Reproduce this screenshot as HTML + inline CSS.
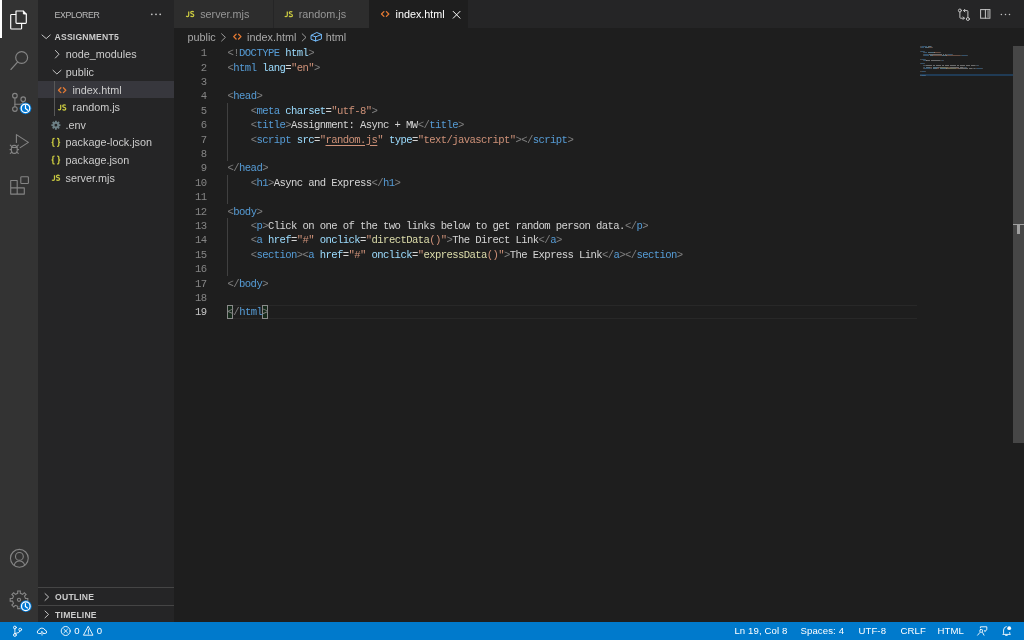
<!DOCTYPE html>
<html><head><meta charset="utf-8">
<style>
*{margin:0;padding:0;box-sizing:border-box}
html,body{width:1024px;height:640px;overflow:hidden;background:#1e1e1e;font-family:"Liberation Sans",sans-serif;color:#ccc;position:relative}
#ov{position:absolute;left:0;top:0;width:1024px;height:640px;overflow:visible}
.bx{position:absolute}
.t{position:absolute;white-space:pre;line-height:1}
#wrap{position:absolute;left:0;top:0;width:1024px;height:640px;will-change:transform}
.ln{position:absolute;left:174px;width:32.4px;height:14.4px;line-height:14.4px;text-align:right;color:#858585;font-family:"Liberation Mono",monospace;font-size:10.6px;letter-spacing:-0.6px;white-space:pre}
.ln.cur{color:#c6c6c6}
.cl{position:absolute;left:227.6px;height:14.4px;line-height:14.4px;color:#d4d4d4;font-family:"Liberation Mono",monospace;font-size:10.6px;letter-spacing:-0.6px;white-space:pre}
.g{color:#808080}.b{color:#569cd6}.a{color:#9cdcfe}.s{color:#ce9178}.y{color:#dcdcaa}.w{color:#d4d4d4}.p{color:#ce9178}
.bm{color:#808080}
u{text-decoration:underline;text-underline-offset:2px;text-decoration-thickness:1px}
.si{position:absolute;font-size:10.8px;color:#cccccc;white-space:pre;line-height:1}
.hd{position:absolute;font-size:8.6px;font-weight:bold;color:#cccccc;white-space:pre;line-height:1;letter-spacing:0.2px}
.st{position:absolute;font-size:9.6px;color:#fff;white-space:pre;line-height:1;letter-spacing:0.1px}
.js{position:absolute;font-size:8.6px;font-weight:bold;color:#cbcb41;white-space:pre;line-height:1;transform-origin:0 0;transform:scaleX(0.78);letter-spacing:-0.1px}
</style></head><body>
<!-- backgrounds -->
<div class="bx" style="left:0;top:0;width:38.4px;height:622.4px;background:#333333"></div>
<div class="bx" style="left:0;top:0;width:2px;height:38.4px;background:#ffffff"></div>
<div class="bx" style="left:38.4px;top:0;width:135.6px;height:622.4px;background:#252526"></div>
<div class="bx" style="left:38.4px;top:80.8px;width:135.6px;height:17.6px;background:#37373d"></div>
<div class="bx" style="left:54.2px;top:80.8px;width:0.8px;height:35.2px;background:#585858"></div>
<div class="bx" style="left:38.4px;top:587px;width:135.6px;height:0.8px;background:#454545"></div>
<div class="bx" style="left:38.4px;top:604.8px;width:135.6px;height:0.8px;background:#454545"></div>
<div class="bx" style="left:174px;top:0;width:850px;height:28px;background:#252526"></div>
<div class="bx" style="left:174px;top:0;width:98.5px;height:28px;background:#2d2d2d"></div>
<div class="bx" style="left:273.5px;top:0;width:95.3px;height:28px;background:#2d2d2d"></div>
<div class="bx" style="left:369.4px;top:0;width:98.4px;height:28px;background:#1e1e1e"></div>
<div class="bx" style="left:1013px;top:45.6px;width:11px;height:397.2px;background:#464646"></div>
<div class="bx" style="left:1013px;top:224px;width:11px;height:1px;background:#a0a0a0"></div>
<div class="bx" style="left:1016.8px;top:224.5px;width:3.2px;height:9.5px;background:#a0a0a0"></div>
<div class="bx" style="left:227.6px;top:304.8px;width:689px;height:14.4px;border-top:1px solid #282828;border-bottom:1px solid #282828"></div>
<div class="bx" style="left:920px;top:74.4px;width:93px;height:1.6px;background:#203b55"></div>
<div class="bx" style="left:227px;top:103.2px;width:1px;height:57.6px;background:#404040"></div>
<div class="bx" style="left:227px;top:175.2px;width:1px;height:28.8px;background:#404040"></div>
<div class="bx" style="left:227px;top:218.4px;width:1px;height:57.6px;background:#404040"></div>
<div class="bx" style="left:227.2px;top:304.8px;width:6.2px;height:14.4px;border:1px solid #8a8a8a;background:#15291a"></div>
<div class="bx" style="left:262px;top:304.8px;width:6.2px;height:14.4px;border:1px solid #8a8a8a;background:#15291a"></div>
<div class="bx" style="left:0;top:622.4px;width:1024px;height:17.6px;background:#007acc"></div>

<div id="wrap">
<!-- sidebar text -->
<div class="t" style="left:54.6px;top:10.6px;font-size:8.8px;color:#bbbbbb;letter-spacing:-0.38px">EXPLORER</div>
<div class="hd" style="left:54.6px;top:33.4px">ASSIGNMENT5</div>
<div class="si" style="left:65.8px;top:49.4px">node_modules</div>
<div class="si" style="left:65.8px;top:67px">public</div>
<div class="si" style="left:72.4px;top:84.6px">index.html</div>
<div class="si" style="left:72.6px;top:102.2px">random.js</div>
<div class="si" style="left:65.6px;top:119.8px">.env</div>
<div class="si" style="left:65.6px;top:137.4px">package-lock.json</div>
<div class="si" style="left:65.6px;top:155px">package.json</div>
<div class="si" style="left:65.6px;top:172.6px">server.mjs</div>
<div class="hd" style="left:55.1px;top:593.2px">OUTLINE</div>
<div class="hd" style="left:55.1px;top:610.6px">TIMELINE</div>

<!-- tabs text -->
<div class="si" style="left:200.2px;top:9.4px;color:#969696">server.mjs</div>
<div class="si" style="left:298.7px;top:9.4px;color:#969696">random.js</div>
<div class="si" style="left:395.5px;top:9.4px;color:#ffffff">index.html</div>

<!-- breadcrumbs -->
<div class="si" style="left:187.5px;top:31.8px;color:#a9a9a9">public</div>
<div class="si" style="left:247.1px;top:31.8px;color:#a9a9a9">index.html</div>
<div class="si" style="left:325.7px;top:31.8px;color:#a9a9a9">html</div>

<div class="ln" style="top:46.10px">1</div>
<div class="cl" style="top:46.10px"><span class="g">&lt;!</span><span class="b">DOCTYPE</span><span class="w"> </span><span class="a">html</span><span class="g">&gt;</span></div>
<div class="ln" style="top:60.50px">2</div>
<div class="cl" style="top:60.50px"><span class="g">&lt;</span><span class="b">html</span><span class="w"> </span><span class="a">lang</span><span class="w">=</span><span class="s">"en"</span><span class="g">&gt;</span></div>
<div class="ln" style="top:74.90px">3</div>
<div class="cl" style="top:74.90px"></div>
<div class="ln" style="top:89.30px">4</div>
<div class="cl" style="top:89.30px"><span class="g">&lt;</span><span class="b">head</span><span class="g">&gt;</span></div>
<div class="ln" style="top:103.70px">5</div>
<div class="cl" style="top:103.70px"><span class="w">    </span><span class="g">&lt;</span><span class="b">meta</span><span class="w"> </span><span class="a">charset</span><span class="w">=</span><span class="s">"utf-8"</span><span class="g">&gt;</span></div>
<div class="ln" style="top:118.10px">6</div>
<div class="cl" style="top:118.10px"><span class="w">    </span><span class="g">&lt;</span><span class="b">title</span><span class="g">&gt;</span><span class="w">Assignment: Async + MW</span><span class="g">&lt;/</span><span class="b">title</span><span class="g">&gt;</span></div>
<div class="ln" style="top:132.50px">7</div>
<div class="cl" style="top:132.50px"><span class="w">    </span><span class="g">&lt;</span><span class="b">script</span><span class="w"> </span><span class="a">src</span><span class="w">=</span><span class="s">"</span><span class="s"><u>random.js</u></span><span class="s">"</span><span class="w"> </span><span class="a">type</span><span class="w">=</span><span class="s">"text/javascript"</span><span class="g">&gt;&lt;/</span><span class="b">script</span><span class="g">&gt;</span></div>
<div class="ln" style="top:146.90px">8</div>
<div class="cl" style="top:146.90px"></div>
<div class="ln" style="top:161.30px">9</div>
<div class="cl" style="top:161.30px"><span class="g">&lt;/</span><span class="b">head</span><span class="g">&gt;</span></div>
<div class="ln" style="top:175.70px">10</div>
<div class="cl" style="top:175.70px"><span class="w">    </span><span class="g">&lt;</span><span class="b">h1</span><span class="g">&gt;</span><span class="w">Async and Express</span><span class="g">&lt;/</span><span class="b">h1</span><span class="g">&gt;</span></div>
<div class="ln" style="top:190.10px">11</div>
<div class="cl" style="top:190.10px"></div>
<div class="ln" style="top:204.50px">12</div>
<div class="cl" style="top:204.50px"><span class="g">&lt;</span><span class="b">body</span><span class="g">&gt;</span></div>
<div class="ln" style="top:218.90px">13</div>
<div class="cl" style="top:218.90px"><span class="w">    </span><span class="g">&lt;</span><span class="b">p</span><span class="g">&gt;</span><span class="w">Click on one of the two links below to get random person data.</span><span class="g">&lt;/</span><span class="b">p</span><span class="g">&gt;</span></div>
<div class="ln" style="top:233.30px">14</div>
<div class="cl" style="top:233.30px"><span class="w">    </span><span class="g">&lt;</span><span class="b">a</span><span class="w"> </span><span class="a">href</span><span class="w">=</span><span class="s">"#"</span><span class="w"> </span><span class="a">onclick</span><span class="w">=</span><span class="s">"</span><span class="y">directData</span><span class="p">()</span><span class="s">"</span><span class="g">&gt;</span><span class="w">The Direct Link</span><span class="g">&lt;/</span><span class="b">a</span><span class="g">&gt;</span></div>
<div class="ln" style="top:247.70px">15</div>
<div class="cl" style="top:247.70px"><span class="w">    </span><span class="g">&lt;</span><span class="b">section</span><span class="g">&gt;&lt;</span><span class="b">a</span><span class="w"> </span><span class="a">href</span><span class="w">=</span><span class="s">"#"</span><span class="w"> </span><span class="a">onclick</span><span class="w">=</span><span class="s">"</span><span class="y">expressData</span><span class="p">()</span><span class="s">"</span><span class="g">&gt;</span><span class="w">The Express Link</span><span class="g">&lt;/</span><span class="b">a</span><span class="g">&gt;&lt;/</span><span class="b">section</span><span class="g">&gt;</span></div>
<div class="ln" style="top:262.10px">16</div>
<div class="cl" style="top:262.10px"></div>
<div class="ln" style="top:276.50px">17</div>
<div class="cl" style="top:276.50px"><span class="g">&lt;/</span><span class="b">body</span><span class="g">&gt;</span></div>
<div class="ln" style="top:290.90px">18</div>
<div class="cl" style="top:290.90px"></div>
<div class="ln cur" style="top:305.30px">19</div>
<div class="cl" style="top:305.30px"><span class="bm">&lt;</span><span class="g">/</span><span class="b">html</span><span class="bm">&gt;</span></div>
<div class="bx" style="left:920.00px;top:45.80px;width:1.60px;height:1.1px;background:#808080;opacity:0.42"></div>
<div class="bx" style="left:921.60px;top:45.80px;width:5.60px;height:1.1px;background:#569cd6;opacity:0.42"></div>
<div class="bx" style="left:928.00px;top:45.80px;width:3.20px;height:1.1px;background:#9cdcfe;opacity:0.42"></div>
<div class="bx" style="left:931.20px;top:45.80px;width:0.80px;height:1.1px;background:#808080;opacity:0.42"></div>
<div class="bx" style="left:920.00px;top:47.40px;width:0.80px;height:1.1px;background:#808080;opacity:0.42"></div>
<div class="bx" style="left:920.80px;top:47.40px;width:3.20px;height:1.1px;background:#569cd6;opacity:0.42"></div>
<div class="bx" style="left:924.80px;top:47.40px;width:3.20px;height:1.1px;background:#9cdcfe;opacity:0.42"></div>
<div class="bx" style="left:928.00px;top:47.40px;width:0.80px;height:1.1px;background:#d4d4d4;opacity:0.42"></div>
<div class="bx" style="left:928.80px;top:47.40px;width:3.20px;height:1.1px;background:#ce9178;opacity:0.42"></div>
<div class="bx" style="left:932.00px;top:47.40px;width:0.80px;height:1.1px;background:#808080;opacity:0.42"></div>
<div class="bx" style="left:920.00px;top:50.60px;width:0.80px;height:1.1px;background:#808080;opacity:0.42"></div>
<div class="bx" style="left:920.80px;top:50.60px;width:3.20px;height:1.1px;background:#569cd6;opacity:0.42"></div>
<div class="bx" style="left:924.00px;top:50.60px;width:0.80px;height:1.1px;background:#808080;opacity:0.42"></div>
<div class="bx" style="left:923.20px;top:52.20px;width:0.80px;height:1.1px;background:#808080;opacity:0.42"></div>
<div class="bx" style="left:924.00px;top:52.20px;width:3.20px;height:1.1px;background:#569cd6;opacity:0.42"></div>
<div class="bx" style="left:928.00px;top:52.20px;width:5.60px;height:1.1px;background:#9cdcfe;opacity:0.42"></div>
<div class="bx" style="left:933.60px;top:52.20px;width:0.80px;height:1.1px;background:#d4d4d4;opacity:0.42"></div>
<div class="bx" style="left:934.40px;top:52.20px;width:5.60px;height:1.1px;background:#ce9178;opacity:0.42"></div>
<div class="bx" style="left:940.00px;top:52.20px;width:0.80px;height:1.1px;background:#808080;opacity:0.42"></div>
<div class="bx" style="left:923.20px;top:53.80px;width:0.80px;height:1.1px;background:#808080;opacity:0.42"></div>
<div class="bx" style="left:924.00px;top:53.80px;width:4.00px;height:1.1px;background:#569cd6;opacity:0.42"></div>
<div class="bx" style="left:928.00px;top:53.80px;width:0.80px;height:1.1px;background:#808080;opacity:0.42"></div>
<div class="bx" style="left:928.80px;top:53.80px;width:8.80px;height:1.1px;background:#d4d4d4;opacity:0.42"></div>
<div class="bx" style="left:938.40px;top:53.80px;width:4.00px;height:1.1px;background:#d4d4d4;opacity:0.42"></div>
<div class="bx" style="left:943.20px;top:53.80px;width:0.80px;height:1.1px;background:#d4d4d4;opacity:0.42"></div>
<div class="bx" style="left:944.80px;top:53.80px;width:1.60px;height:1.1px;background:#d4d4d4;opacity:0.42"></div>
<div class="bx" style="left:946.40px;top:53.80px;width:1.60px;height:1.1px;background:#808080;opacity:0.42"></div>
<div class="bx" style="left:948.00px;top:53.80px;width:4.00px;height:1.1px;background:#569cd6;opacity:0.42"></div>
<div class="bx" style="left:952.00px;top:53.80px;width:0.80px;height:1.1px;background:#808080;opacity:0.42"></div>
<div class="bx" style="left:923.20px;top:55.40px;width:0.80px;height:1.1px;background:#808080;opacity:0.42"></div>
<div class="bx" style="left:924.00px;top:55.40px;width:4.80px;height:1.1px;background:#569cd6;opacity:0.42"></div>
<div class="bx" style="left:929.60px;top:55.40px;width:2.40px;height:1.1px;background:#9cdcfe;opacity:0.42"></div>
<div class="bx" style="left:932.00px;top:55.40px;width:0.80px;height:1.1px;background:#d4d4d4;opacity:0.42"></div>
<div class="bx" style="left:932.80px;top:55.40px;width:0.80px;height:1.1px;background:#ce9178;opacity:0.42"></div>
<div class="bx" style="left:933.60px;top:55.40px;width:7.20px;height:1.1px;background:#ce9178;opacity:0.42"></div>
<div class="bx" style="left:940.80px;top:55.40px;width:0.80px;height:1.1px;background:#ce9178;opacity:0.42"></div>
<div class="bx" style="left:942.40px;top:55.40px;width:3.20px;height:1.1px;background:#9cdcfe;opacity:0.42"></div>
<div class="bx" style="left:945.60px;top:55.40px;width:0.80px;height:1.1px;background:#d4d4d4;opacity:0.42"></div>
<div class="bx" style="left:946.40px;top:55.40px;width:13.60px;height:1.1px;background:#ce9178;opacity:0.42"></div>
<div class="bx" style="left:960.00px;top:55.40px;width:2.40px;height:1.1px;background:#808080;opacity:0.42"></div>
<div class="bx" style="left:962.40px;top:55.40px;width:4.80px;height:1.1px;background:#569cd6;opacity:0.42"></div>
<div class="bx" style="left:967.20px;top:55.40px;width:0.80px;height:1.1px;background:#808080;opacity:0.42"></div>
<div class="bx" style="left:920.00px;top:58.60px;width:1.60px;height:1.1px;background:#808080;opacity:0.42"></div>
<div class="bx" style="left:921.60px;top:58.60px;width:3.20px;height:1.1px;background:#569cd6;opacity:0.42"></div>
<div class="bx" style="left:924.80px;top:58.60px;width:0.80px;height:1.1px;background:#808080;opacity:0.42"></div>
<div class="bx" style="left:923.20px;top:60.20px;width:0.80px;height:1.1px;background:#808080;opacity:0.42"></div>
<div class="bx" style="left:924.00px;top:60.20px;width:1.60px;height:1.1px;background:#569cd6;opacity:0.42"></div>
<div class="bx" style="left:925.60px;top:60.20px;width:0.80px;height:1.1px;background:#808080;opacity:0.42"></div>
<div class="bx" style="left:926.40px;top:60.20px;width:4.00px;height:1.1px;background:#d4d4d4;opacity:0.42"></div>
<div class="bx" style="left:931.20px;top:60.20px;width:2.40px;height:1.1px;background:#d4d4d4;opacity:0.42"></div>
<div class="bx" style="left:934.40px;top:60.20px;width:5.60px;height:1.1px;background:#d4d4d4;opacity:0.42"></div>
<div class="bx" style="left:940.00px;top:60.20px;width:1.60px;height:1.1px;background:#808080;opacity:0.42"></div>
<div class="bx" style="left:941.60px;top:60.20px;width:1.60px;height:1.1px;background:#569cd6;opacity:0.42"></div>
<div class="bx" style="left:943.20px;top:60.20px;width:0.80px;height:1.1px;background:#808080;opacity:0.42"></div>
<div class="bx" style="left:920.00px;top:63.40px;width:0.80px;height:1.1px;background:#808080;opacity:0.42"></div>
<div class="bx" style="left:920.80px;top:63.40px;width:3.20px;height:1.1px;background:#569cd6;opacity:0.42"></div>
<div class="bx" style="left:924.00px;top:63.40px;width:0.80px;height:1.1px;background:#808080;opacity:0.42"></div>
<div class="bx" style="left:923.20px;top:65.00px;width:0.80px;height:1.1px;background:#808080;opacity:0.42"></div>
<div class="bx" style="left:924.00px;top:65.00px;width:0.80px;height:1.1px;background:#569cd6;opacity:0.42"></div>
<div class="bx" style="left:924.80px;top:65.00px;width:0.80px;height:1.1px;background:#808080;opacity:0.42"></div>
<div class="bx" style="left:925.60px;top:65.00px;width:4.00px;height:1.1px;background:#d4d4d4;opacity:0.42"></div>
<div class="bx" style="left:930.40px;top:65.00px;width:1.60px;height:1.1px;background:#d4d4d4;opacity:0.42"></div>
<div class="bx" style="left:932.80px;top:65.00px;width:2.40px;height:1.1px;background:#d4d4d4;opacity:0.42"></div>
<div class="bx" style="left:936.00px;top:65.00px;width:1.60px;height:1.1px;background:#d4d4d4;opacity:0.42"></div>
<div class="bx" style="left:938.40px;top:65.00px;width:2.40px;height:1.1px;background:#d4d4d4;opacity:0.42"></div>
<div class="bx" style="left:941.60px;top:65.00px;width:2.40px;height:1.1px;background:#d4d4d4;opacity:0.42"></div>
<div class="bx" style="left:944.80px;top:65.00px;width:4.00px;height:1.1px;background:#d4d4d4;opacity:0.42"></div>
<div class="bx" style="left:949.60px;top:65.00px;width:4.00px;height:1.1px;background:#d4d4d4;opacity:0.42"></div>
<div class="bx" style="left:954.40px;top:65.00px;width:1.60px;height:1.1px;background:#d4d4d4;opacity:0.42"></div>
<div class="bx" style="left:956.80px;top:65.00px;width:2.40px;height:1.1px;background:#d4d4d4;opacity:0.42"></div>
<div class="bx" style="left:960.00px;top:65.00px;width:4.80px;height:1.1px;background:#d4d4d4;opacity:0.42"></div>
<div class="bx" style="left:965.60px;top:65.00px;width:4.80px;height:1.1px;background:#d4d4d4;opacity:0.42"></div>
<div class="bx" style="left:971.20px;top:65.00px;width:4.00px;height:1.1px;background:#d4d4d4;opacity:0.42"></div>
<div class="bx" style="left:975.20px;top:65.00px;width:1.60px;height:1.1px;background:#808080;opacity:0.42"></div>
<div class="bx" style="left:976.80px;top:65.00px;width:0.80px;height:1.1px;background:#569cd6;opacity:0.42"></div>
<div class="bx" style="left:977.60px;top:65.00px;width:0.80px;height:1.1px;background:#808080;opacity:0.42"></div>
<div class="bx" style="left:923.20px;top:66.60px;width:0.80px;height:1.1px;background:#808080;opacity:0.42"></div>
<div class="bx" style="left:924.00px;top:66.60px;width:0.80px;height:1.1px;background:#569cd6;opacity:0.42"></div>
<div class="bx" style="left:925.60px;top:66.60px;width:3.20px;height:1.1px;background:#9cdcfe;opacity:0.42"></div>
<div class="bx" style="left:928.80px;top:66.60px;width:0.80px;height:1.1px;background:#d4d4d4;opacity:0.42"></div>
<div class="bx" style="left:929.60px;top:66.60px;width:2.40px;height:1.1px;background:#ce9178;opacity:0.42"></div>
<div class="bx" style="left:932.80px;top:66.60px;width:5.60px;height:1.1px;background:#9cdcfe;opacity:0.42"></div>
<div class="bx" style="left:938.40px;top:66.60px;width:0.80px;height:1.1px;background:#d4d4d4;opacity:0.42"></div>
<div class="bx" style="left:939.20px;top:66.60px;width:0.80px;height:1.1px;background:#ce9178;opacity:0.42"></div>
<div class="bx" style="left:940.00px;top:66.60px;width:8.00px;height:1.1px;background:#dcdcaa;opacity:0.42"></div>
<div class="bx" style="left:948.00px;top:66.60px;width:1.60px;height:1.1px;background:#ce9178;opacity:0.42"></div>
<div class="bx" style="left:949.60px;top:66.60px;width:0.80px;height:1.1px;background:#ce9178;opacity:0.42"></div>
<div class="bx" style="left:950.40px;top:66.60px;width:0.80px;height:1.1px;background:#808080;opacity:0.42"></div>
<div class="bx" style="left:951.20px;top:66.60px;width:2.40px;height:1.1px;background:#d4d4d4;opacity:0.42"></div>
<div class="bx" style="left:954.40px;top:66.60px;width:4.80px;height:1.1px;background:#d4d4d4;opacity:0.42"></div>
<div class="bx" style="left:960.00px;top:66.60px;width:3.20px;height:1.1px;background:#d4d4d4;opacity:0.42"></div>
<div class="bx" style="left:963.20px;top:66.60px;width:1.60px;height:1.1px;background:#808080;opacity:0.42"></div>
<div class="bx" style="left:964.80px;top:66.60px;width:0.80px;height:1.1px;background:#569cd6;opacity:0.42"></div>
<div class="bx" style="left:965.60px;top:66.60px;width:0.80px;height:1.1px;background:#808080;opacity:0.42"></div>
<div class="bx" style="left:923.20px;top:68.20px;width:0.80px;height:1.1px;background:#808080;opacity:0.42"></div>
<div class="bx" style="left:924.00px;top:68.20px;width:5.60px;height:1.1px;background:#569cd6;opacity:0.42"></div>
<div class="bx" style="left:929.60px;top:68.20px;width:1.60px;height:1.1px;background:#808080;opacity:0.42"></div>
<div class="bx" style="left:931.20px;top:68.20px;width:0.80px;height:1.1px;background:#569cd6;opacity:0.42"></div>
<div class="bx" style="left:932.80px;top:68.20px;width:3.20px;height:1.1px;background:#9cdcfe;opacity:0.42"></div>
<div class="bx" style="left:936.00px;top:68.20px;width:0.80px;height:1.1px;background:#d4d4d4;opacity:0.42"></div>
<div class="bx" style="left:936.80px;top:68.20px;width:2.40px;height:1.1px;background:#ce9178;opacity:0.42"></div>
<div class="bx" style="left:940.00px;top:68.20px;width:5.60px;height:1.1px;background:#9cdcfe;opacity:0.42"></div>
<div class="bx" style="left:945.60px;top:68.20px;width:0.80px;height:1.1px;background:#d4d4d4;opacity:0.42"></div>
<div class="bx" style="left:946.40px;top:68.20px;width:0.80px;height:1.1px;background:#ce9178;opacity:0.42"></div>
<div class="bx" style="left:947.20px;top:68.20px;width:8.80px;height:1.1px;background:#dcdcaa;opacity:0.42"></div>
<div class="bx" style="left:956.00px;top:68.20px;width:1.60px;height:1.1px;background:#ce9178;opacity:0.42"></div>
<div class="bx" style="left:957.60px;top:68.20px;width:0.80px;height:1.1px;background:#ce9178;opacity:0.42"></div>
<div class="bx" style="left:958.40px;top:68.20px;width:0.80px;height:1.1px;background:#808080;opacity:0.42"></div>
<div class="bx" style="left:959.20px;top:68.20px;width:2.40px;height:1.1px;background:#d4d4d4;opacity:0.42"></div>
<div class="bx" style="left:962.40px;top:68.20px;width:5.60px;height:1.1px;background:#d4d4d4;opacity:0.42"></div>
<div class="bx" style="left:968.80px;top:68.20px;width:3.20px;height:1.1px;background:#d4d4d4;opacity:0.42"></div>
<div class="bx" style="left:972.00px;top:68.20px;width:1.60px;height:1.1px;background:#808080;opacity:0.42"></div>
<div class="bx" style="left:973.60px;top:68.20px;width:0.80px;height:1.1px;background:#569cd6;opacity:0.42"></div>
<div class="bx" style="left:974.40px;top:68.20px;width:2.40px;height:1.1px;background:#808080;opacity:0.42"></div>
<div class="bx" style="left:976.80px;top:68.20px;width:5.60px;height:1.1px;background:#569cd6;opacity:0.42"></div>
<div class="bx" style="left:982.40px;top:68.20px;width:0.80px;height:1.1px;background:#808080;opacity:0.42"></div>
<div class="bx" style="left:920.00px;top:71.40px;width:1.60px;height:1.1px;background:#808080;opacity:0.42"></div>
<div class="bx" style="left:921.60px;top:71.40px;width:3.20px;height:1.1px;background:#569cd6;opacity:0.42"></div>
<div class="bx" style="left:924.80px;top:71.40px;width:0.80px;height:1.1px;background:#808080;opacity:0.42"></div>
<div class="bx" style="left:920.00px;top:74.60px;width:0.80px;height:1.1px;background:#808080;opacity:0.42"></div>
<div class="bx" style="left:920.80px;top:74.60px;width:0.80px;height:1.1px;background:#808080;opacity:0.42"></div>
<div class="bx" style="left:921.60px;top:74.60px;width:3.20px;height:1.1px;background:#569cd6;opacity:0.42"></div>
<div class="bx" style="left:924.80px;top:74.60px;width:0.80px;height:1.1px;background:#808080;opacity:0.42"></div>

<!-- status -->
<div class="st" style="left:74.3px;top:626.4px">0</div>
<div class="st" style="left:96.7px;top:626.4px">0</div>
<div class="st" style="left:734.4px;top:626.4px">Ln 19, Col 8</div>
<div class="st" style="left:800.5px;top:626.4px">Spaces: 4</div>
<div class="st" style="left:858.4px;top:626.4px">UTF-8</div>
<div class="st" style="left:900.5px;top:626.4px">CRLF</div>
<div class="st" style="left:937.5px;top:626.4px">HTML</div>

</div>
<svg id="ov" viewBox="0 0 1024 640" fill="none" stroke-linecap="round" stroke-linejoin="round">
  <!-- files icon -->
  <g stroke="#ffffff" stroke-width="1.15">
    <path d="M16,11 H23.2 L26.3,14.1 V22.6 Q26.3,23.4 25.5,23.4 H16.8 Q16,23.4 16,22.6 Z"/>
    <path d="M15.7,14.5 H11.5 Q10.7,14.5 10.7,15.3 V28.2 Q10.7,29 11.5,29 H20.8 Q21.6,29 21.6,28.2 V23.6"/>
    <path d="M23.4,11.2 V14 H26.2" fill="#ffffff" stroke-width="0.9"/>
  </g>
  <!-- search -->
  <g stroke="#858585" stroke-width="1.15">
    <circle cx="21.65" cy="57.5" r="5.95"/>
    <path d="M17.3,62.4 L11,69.4" stroke-width="1.3"/>
  </g>
  <!-- source control -->
  <g stroke="#858585" stroke-width="1.1">
    <circle cx="14.9" cy="95.7" r="2.3"/>
    <circle cx="14.9" cy="109.1" r="2.3"/>
    <circle cx="23.2" cy="99.2" r="2.3"/>
    <path d="M14.9,98 V106.8"/>
    <path d="M23.2,101.5 Q23.2,104.3 19.5,104.3 H14.9"/>
  </g>
  <!-- debug -->
  <g stroke="#858585" stroke-width="1.1">
    <path d="M16.4,142.5 V134.6 L28.4,142.4 L20.2,147.6"/>
    <ellipse cx="14.3" cy="149.4" rx="3" ry="4"/>
    <path d="M11.6,147.5 H17 M10.3,145.2 L11.8,146.6 M18.3,145.2 L16.8,146.6 M10,149.6 H11.3 M17.3,149.6 H18.6 M10.3,153.4 L11.8,152.2 M18.3,153.4 L16.8,152.2"/>
  </g>
  <!-- extensions -->
  <g stroke="#858585" stroke-width="1.1">
    <path d="M10.7,180.5 H17.2 V187.9 H24.3 V194.1 H10.7 Z M10.7,187.9 H17.2 V194.1"/>
    <rect x="20.8" y="176.7" width="7.6" height="6.8" rx="0.8"/>
  </g>
  <!-- accounts -->
  <g stroke="#858585" stroke-width="1.1">
    <circle cx="19.35" cy="558.3" r="8.9"/>
    <circle cx="19.4" cy="556.4" r="3.9"/>
    <path d="M14.2,565 Q15.5,561 19.4,561 Q23.3,561 24.6,565"/>
  </g>
  <!-- gear -->
  <g stroke="#858585" stroke-width="1.1" stroke-linejoin="miter">
    <path d="M17.70,593.33 L17.70,591.00 L20.30,591.00 L20.30,593.33 L22.66,594.31 L24.31,592.66 L26.14,594.49 L24.49,596.14 L25.47,598.50 L27.80,598.50 L27.80,601.10 L25.47,601.10 L24.49,603.46 L26.14,605.11 L24.31,606.94 L22.66,605.29 L20.30,606.27 L20.30,608.60 L17.70,608.60 L17.70,606.27 L15.34,605.29 L13.69,606.94 L11.86,605.11 L13.51,603.46 L12.53,601.10 L10.20,601.10 L10.20,598.50 L12.53,598.50 L13.51,596.14 L11.86,594.49 L13.69,592.66 L15.34,594.31Z"/>
    <circle cx="19" cy="599.8" r="1.6"/>
  </g>
  <!-- badges -->
  <g>
    <circle cx="25.5" cy="108.3" r="5.9" fill="#0078d4"/>
    <circle cx="25.5" cy="108.3" r="4.3" stroke="#fff" stroke-width="1.25"/>
    <path d="M25.5,105.4 V108.6 L27.8,110.3" stroke="#fff" stroke-width="1.2"/>
    <circle cx="25.8" cy="606.2" r="5.9" fill="#0078d4"/>
    <circle cx="25.8" cy="606.2" r="4.3" stroke="#fff" stroke-width="1.25"/>
    <path d="M25.4,603.5 V606.5 L27.5,608" stroke="#fff" stroke-width="1.2"/>
  </g>
  <!-- sidebar chevrons -->
  <g stroke="#c5c5c5" stroke-width="1">
    <path d="M42,35 L46.2,38.6 L50.2,35"/>
    <path d="M55.4,50.4 L59,54.2 L55.4,58"/>
    <path d="M53,70.3 L56.9,74 L61,70.3"/>
    <path d="M45,593.6 L48.6,597 L45,600.4"/>
    <path d="M45,611 L48.6,614.4 L45,617.8"/>
  </g>
  <!-- more dots explorer -->
  <g fill="#c5c5c5">
    <circle cx="151.8" cy="14.3" r="0.9"/><circle cx="156" cy="14.3" r="0.9"/><circle cx="160.2" cy="14.3" r="0.9"/>
  </g>
  <!-- html icons -->
  <defs>
    <path id="hic" d="M2.9,0.5 L0.5,2.9 L2.9,5.3 M5.4,0.5 L7.8,2.9 L5.4,5.3"/>
    <path id="jic" d="M2.7,0.4 V4.2 Q2.7,5.5 1.4,5.5 Q0.6,5.5 0.3,4.9 M7.7,1 Q7.2,0.4 6.2,0.4 Q4.7,0.4 4.7,1.6 Q4.7,2.6 6.2,2.9 Q7.8,3.2 7.8,4.3 Q7.8,5.6 6.2,5.6 Q5.1,5.6 4.5,4.9"/>
  </defs>
  <g stroke="#e37933" stroke-width="1.3">
    <use href="#hic" x="58" y="87.3"/>
    <use href="#hic" x="381" y="11.1"/>
    <use href="#hic" x="233.2" y="33.7"/>
  </g>
  <g stroke="#cbcb41" stroke-width="1.25" stroke-linecap="butt">
    <use href="#jic" x="58" y="104.4"/>
    <use href="#jic" x="51.8" y="174.8"/>
    <use href="#jic" x="186" y="11"/>
    <use href="#jic" x="284.6" y="11.1"/>
  </g>
  <!-- env gear -->
  <path fill="#6d8086" fill-rule="evenodd" d="M54.92,122.05 L54.99,120.69 L56.81,120.69 L56.88,122.05 L57.44,122.28 L58.44,121.37 L59.73,122.66 L58.82,123.66 L59.05,124.22 L60.41,124.29 L60.41,126.11 L59.05,126.18 L58.82,126.74 L59.73,127.74 L58.44,129.03 L57.44,128.12 L56.88,128.35 L56.81,129.71 L54.99,129.71 L54.92,128.35 L54.36,128.12 L53.36,129.03 L52.07,127.74 L52.98,126.74 L52.75,126.18 L51.39,126.11 L51.39,124.29 L52.75,124.22 L52.98,123.66 L52.07,122.66 L53.36,121.37 L54.36,122.28Z M57.3,125.2 A1.4,1.4 0 1 0 54.5,125.2 A1.4,1.4 0 1 0 57.3,125.2Z"/>
  <!-- json braces -->
  <defs>
    <path id="brc" d="M2.5,0 Q1.3,0 1.3,1.2 V3 Q1.3,3.9 0.5,3.9 Q1.3,3.9 1.3,4.8 V6.6 Q1.3,7.8 2.5,7.8 M6,0 Q7.2,0 7.2,1.2 V3 Q7.2,3.9 8,3.9 Q7.2,3.9 7.2,4.8 V6.6 Q7.2,7.8 6,7.8"/>
  </defs>
  <g stroke="#cbcb41" stroke-width="1.3">
    <use href="#brc" x="51.6" y="138.5"/>
    <use href="#brc" x="51.6" y="156.1"/>
  </g>
  <!-- tab close -->
  <path d="M453.2,11.4 L460,18.2 M460,11.4 L453.2,18.2" stroke="#ffffff" stroke-width="1"/>
  <!-- breadcrumb chevrons -->
  <g stroke="#a9a9a9" stroke-width="0.9">
    <path d="M221.6,33.8 L225.4,37.4 L221.6,41"/>
    <path d="M302.2,33.8 L306,37.4 L302.2,41"/>
  </g>
  <!-- cube -->
  <g stroke="#75beff" stroke-width="1">
    <path d="M311.4,35.3 L316.8,32.5 L321.4,34.5 V39 L315.6,41 L311.4,39.4 Z M311.4,35.3 L315.6,36.9 L321.4,34.5 M315.6,36.9 V41"/>
  </g>
  <!-- editor actions -->
  <g stroke="#c5c5c5" stroke-width="1">
    <path d="M959.9,12.2 V17.6 Q959.9,18.2 960.5,18.2 H964.4 M963.1,16.9 L964.4,18.2 L963.1,19.5"/>
    <path d="M967.9,17.2 V11.2 Q967.9,10.6 967.3,10.6 H963.6 M964.9,9.3 L963.6,10.6 L964.9,11.9"/>
    <circle cx="959.9" cy="10.5" r="1.5"/>
    <circle cx="967.9" cy="19" r="1.5"/>
    <rect x="980.6" y="9.6" width="9.3" height="8.6" stroke-linejoin="miter"/>
    <path d="M985.4,9.6 V18.2"/>
  </g>
  <rect x="987.2" y="10.2" width="2.2" height="7.4" fill="#707070"/>
  <g fill="#c5c5c5">
    <circle cx="1001.4" cy="14.4" r="0.75"/><circle cx="1005.5" cy="14.4" r="0.75"/><circle cx="1009.5" cy="14.4" r="0.75"/>
  </g>
  <!-- status icons -->
  <g stroke="#ffffff" stroke-width="0.9">
    <circle cx="14.9" cy="627.5" r="1.4"/>
    <circle cx="14.9" cy="635" r="1.4"/>
    <circle cx="20.2" cy="629.6" r="1.4"/>
    <path d="M14.9,628.9 V633.6 M20.2,631 Q20.2,633 14.9,633.6"/>
    <path d="M40.8,633.5 H38.6 Q37.3,633.5 37.3,632 Q37.3,630.4 38.8,630.2 Q39.3,628.1 41.9,628.1 Q44.2,628.1 44.8,630 Q46.6,630.3 46.6,632 Q46.6,633.5 45.2,633.5 H43.2"/>
    <path d="M42,635.2 V631.6 M41,632.5 L42,631.5 L43,632.5" stroke-width="0.8"/>
    <circle cx="65.7" cy="631" r="4.5"/>
    <path d="M63.9,629.2 L67.5,632.8 M67.5,629.2 L63.9,632.8"/>
    <path d="M88.4,626.6 L93,635.2 H83.8 Z"/>
    <path d="M88.4,629.6 V632.4 M88.4,633.6 V633.8"/>
    <path d="M977.6,635.2 L979.8,632.6 M982.6,632.6 L984,635.2"/>
    <rect x="979.9" y="629.6" width="2.6" height="2.6" rx="0.6"/>
    <path d="M980.4,627.8 V626.8 H986.8 V629.8 L984.8,631.6 V630.4"/>
    <path d="M1006.2,626.6 Q1003.6,627.2 1003.6,630 V633 Q1003.6,633.8 1002.8,634.4 H1010.4 Q1009.6,633.8 1009.6,632.6 M1005.6,635.4 H1007.2"/>
  </g>
  <circle cx="1009.2" cy="628.2" r="1.9" fill="#fff"/>
</svg>
</body></html>
